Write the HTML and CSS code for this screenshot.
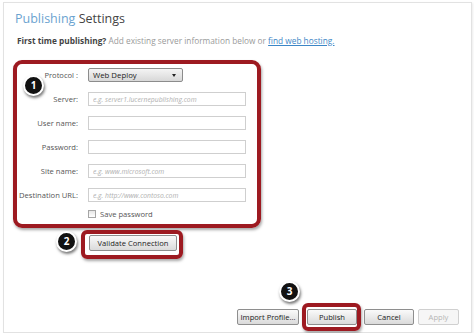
FILE: index.html
```html
<!DOCTYPE html>
<html>

<head>
    <meta charset="UTF-8">
    <title>Publishing Settings</title>
    <link rel="stylesheet" href="styles.css">
</head>

<body>
    <div class="window">
        <h1 class="title"><span class="accent">Publishing</span> Settings</h1>
        <p class="intro"><b>First time publishing?</b> Add existing server information below or <a href="#">find web hosting.</a></p>

        <div class="box">
            <div class="form">
                <label>Protocol :</label>
                <div class="select">Web Deploy <span class="arrow"></span></div>

                <label>Server:</label>
                <div class="field"><input type="text" placeholder="e.g. server1.lucernepublishing.com"></div>

                <label>User name:</label>
                <div class="field"><input type="text"></div>

                <label>Password:</label>
                <div class="field"><input type="text"></div>

                <label>Site name:</label>
                <div class="field"><input type="text" placeholder="e.g. www.microsoft.com"></div>

                <label>Destination URL:</label>
                <div class="field"><input type="text" placeholder="e.g. http://www.contoso.com"></div>

                <span></span>
                <div class="check"><span class="checkbox"></span>Save password</div>
            </div>
        </div>

        <div class="validate">
            <div class="ring"><button class="btn">Validate Connection</button></div>
        </div>

        <div class="footer">
            <button class="btn">Import Profile...</button>
            <div class="ring small"><button class="btn">Publish</button></div>
            <button class="btn">Cancel</button>
            <button class="btn" disabled>Apply</button>
        </div>

        <!-- step markers -->
        <span class="step step1">1</span>
        <span class="step step2">2</span>
        <span class="step step3">3</span>
    </div>
</body>

</html>
```

FILE: styles.css
```css
body {
    margin: 0;
    padding: 0;
    background-color: #fff;
    font-family: "Open Sans", "Liberation Sans", sans-serif;
    color: #333;
}

.window {
    position: relative;
    box-sizing: border-box;
    width: 469px;
    height: 331px;
    margin: 2px 0 0 3px;
    border: 1px solid #e2e2e2;
    box-shadow: 1px 1px 2px rgba(0, 0, 0, 0.08);
    padding: 0 12px 0 11px;
}

.title {
    margin: 6px 0 0 0;
    font-size: 12.5px;
    font-weight: normal;
    color: #444;
    line-height: 20px;
}

.title .accent {
    color: #6ba3d0;
}

.intro {
    margin: 6px 0 0 2px;
    font-size: 8.3px;
    color: #9a9a9a;
    line-height: 12px;
}

.intro b {
    color: #444;
}

.intro a {
    color: #3c86c6;
}

/* red highlight around the form */
.box {
    box-sizing: border-box;
    width: 248px;
    height: 168px;
    margin-top: 13px;
    margin-left: -2px;
    border: 4px solid #9d1a21;
    border-radius: 9px;
    box-shadow: 1px 2px 3px rgba(0, 0, 0, 0.35);
    padding: 4px 9px 0 0;
}

.form {
    display: grid;
    grid-template-columns: 61px 158px;
    column-gap: 10px;
    row-gap: 10px;
    align-items: center;
}

.form label {
    text-align: right;
    font-size: 7.6px;
    color: #555;
}

.select {
    position: relative;
    box-sizing: border-box;
    width: 95px;
    height: 14px;
    border: 1px solid #8c8c8c;
    border-radius: 2px;
    background: linear-gradient(#f4f4f4, #d8d8d8);
    font-size: 7.8px;
    line-height: 12px;
    padding-left: 4px;
    color: #222;
}

.arrow {
    position: absolute;
    right: 6px;
    top: 5px;
    border-left: 2.5px solid transparent;
    border-right: 2.5px solid transparent;
    border-top: 3px solid #222;
}

.field input {
    box-sizing: border-box;
    display: block;
    width: 158px;
    height: 14px;
    margin: 0;
    border: 1px solid #cfcfcf;
    font-family: "Open Sans", "Liberation Sans", sans-serif;
    font-size: 6.8px;
    padding: 0 4px;
    background: #fff;
}

.field input::placeholder {
    color: #b0b0b0;
    font-style: italic;
}

.check {
    display: flex;
    align-items: center;
    font-size: 7.6px;
    color: #555;
    margin-top: -3px;
}

.checkbox {
    box-sizing: border-box;
    width: 8px;
    height: 8px;
    border: 1px solid #a5a5a5;
    background: linear-gradient(#e6e6e6, #fff);
    margin-right: 4px;
}

.validate {
    margin-top: 1px;
    padding-left: 66px;
}

.ring {
    display: inline-block;
    border: 4px solid #9d1a21;
    border-radius: 6px;
    box-shadow: 1px 2px 3px rgba(0, 0, 0, 0.35);
    padding: 1px 2px 4px 4px;
}

.btn {
    display: block;
    box-sizing: border-box;
    height: 16px;
    border: 1px solid #8e8e8e;
    border-radius: 2px;
    background: linear-gradient(#fafafa, #dadada);
    font-family: "Open Sans", "Liberation Sans", sans-serif;
    font-size: 7.6px;
    color: #222;
    padding: 0;
    margin: 0;
    white-space: nowrap;
}

.validate .btn {
    width: 88px;
}

.btn:disabled {
    color: #b5b5b5;
    border-color: #d0d0d0;
    background: #f6f6f6;
}

.footer {
    display: flex;
    justify-content: flex-end;
    align-items: center;
    gap: 3px;
    margin-top: 44px;
}

.footer > .btn {
    width: 50px;
}

.footer > .btn:first-child {
    width: 62px;
}

.footer > .btn:last-child {
    width: 41px;
    margin-left: 1px;
}

.ring.small {
    padding: 2px 0 2px 1px;
}

.ring.small .btn {
    width: 50px;
}

.step {
    position: absolute;
    box-sizing: border-box;
    width: 21px;
    height: 21px;
    border-radius: 50%;
    background: #111;
    border: 2px solid #fff;
    box-shadow: 1px 2px 3px rgba(0, 0, 0, 0.55);
    color: #fff;
    font-size: 10px;
    font-weight: bold;
    text-align: center;
    line-height: 17px;
}

.step1 {
    left: 19px;
    top: 72px;
}

.step2 {
    left: 52px;
    top: 228px;
}

.step3 {
    left: 275px;
    top: 278px;
}
```
